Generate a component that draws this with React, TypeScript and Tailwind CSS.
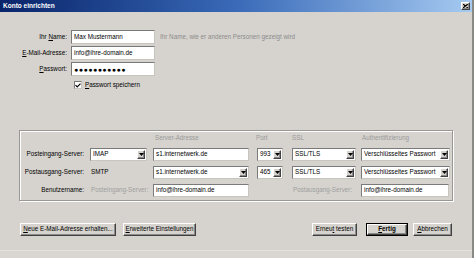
import React from 'react';
import { clsx, type ClassValue } from 'clsx';
import { twMerge } from 'tailwind-merge';

function cn(...inputs: ClassValue[]) {
  return twMerge(clsx(inputs));
}

const sunken =
  'border border-t-[#7a7a7a] border-l-[#7a7a7a] border-r-[#c8c5bf] border-b-[#c8c5bf] bg-white';
const raised =
  'border border-t-white border-l-white border-r-[#404040] border-b-[#404040] shadow-[inset_-1px_-1px_0_#8a8a8a] bg-[#d6d3ce]';

// first letter underlined, like a windows mnemonic
const Mn: React.FC<{ k: string; rest: string; before?: string }> = ({ k, rest, before }) => (
  <span>
    {before}
    <span className="underline underline-offset-[1px]">{k}</span>
    {rest}
  </span>
);

const Field: React.FC<{ value: string; className?: string; password?: boolean }> = ({
  value,
  className,
  password
}) => (
  <div className={cn(sunken, 'h-[14px] flex items-center pl-[2px] overflow-hidden', className)}>
    <span className={password ? 'tracking-[0.5px] text-[7px]' : ''}>{value}</span>
  </div>
);

const DropButton = () => (
  <span className={cn(raised, 'w-[8px] h-[9px] mr-[1px] flex items-center justify-center shrink-0')}>
    <svg width="5" height="3" viewBox="0 0 5 3">
      <path d="M0 0h5L2.5 3z" fill="#000" />
    </svg>
  </span>
);

const Select: React.FC<{ value: string; className?: string }> = ({ value, className }) => (
  <div className={cn(sunken, 'h-[13px] flex items-center overflow-hidden', className)}>
    <span className="flex-1 pl-[2px] truncate">{value}</span>
    <DropButton />
  </div>
);

const Button: React.FC<{ children: React.ReactNode; className?: string; primary?: boolean }> = ({
  children,
  className,
  primary
}) => (
  <div
    className={cn(
      'h-[13px] flex items-center justify-center',
      primary ? 'border border-black' : '',
      className
    )}
  >
    <div className={cn(raised, 'w-full h-full flex items-center justify-center', primary && 'font-bold')}>
      {children}
    </div>
  </div>
);

export default function App() {
  return (
    <div className="w-[474px] h-[258px] bg-[#d6d3ce] font-['Liberation_Sans',Arial,sans-serif] text-[6.3px] text-black leading-none overflow-hidden flex flex-col border-r-[2px] border-r-[#8a8884]">
      {/* title bar */}
      <div className="h-[12px] shrink-0 flex items-center justify-between pl-[3px] pr-[2px] bg-gradient-to-r from-[#0a246a] via-[#3a6ab8] to-[#a6caf0]">
        <span className="text-white font-bold text-[6.5px]">Konto einrichten</span>
        <span className={cn(raised, 'w-[9px] h-[8px] flex items-center justify-center')}>
          <svg width="5" height="4" viewBox="0 0 5 4">
            <path d="M0 0L5 4M5 0L0 4" stroke="#000" strokeWidth="1.2" />
          </svg>
        </span>
      </div>

      {/* account fields */}
      <div className="mt-[18px] grid grid-cols-[67px_84px_1fr] gap-x-[4px] gap-y-[2px] items-center">
        <span className="text-right"><Mn before="Ihr " k="N" rest="ame:" /></span>
        <Field value="Max Mustermann" />
        <span className="ml-[1px] text-[#8c8c8c]">Ihr Name, wie er anderen Personen gezeigt wird</span>

        <span className="text-right"><Mn k="E" rest="-Mail-Adresse:" /></span>
        <Field value="info@ihre-domain.de" />
        <span />

        <span className="text-right"><Mn k="P" rest="asswort:" /></span>
        <Field value="●●●●●●●●●●●" password />
        <span />
      </div>

      <div className="mt-[5px] ml-[74px] flex items-center gap-[3px]">
        <span className={cn(sunken, 'w-[8px] h-[8px] flex items-center justify-center')}>
          <svg width="6" height="5" viewBox="0 0 6 5">
            <path d="M0.5 2.2L2.2 4L5.5 0.6" stroke="#000" strokeWidth="1.2" fill="none" />
          </svg>
        </span>
        <Mn k="P" rest="asswort speichern" />
      </div>

      {/* server settings */}
      <div className="mt-[41px] ml-[19px] w-[434px] h-[71px] border border-[#9a9894] shadow-[inset_1px_1px_0_#fff,1px_1px_0_#fff] pt-[3px]">
        <div className="grid grid-cols-[70px_63px_104px_35px_69px_89px] grid-rows-[9px_13px_13px_13px] gap-y-[5px] items-center">
          <span />
          <span />
          <span className="pl-[2px] text-[#9a9a9a]">Server-Adresse</span>
          <span className="text-[#9a9a9a] -ml-[1px]">Port</span>
          <span className="text-[#9a9a9a]">SSL</span>
          <span className="pl-[1px] text-[#9a9a9a]">Authentifizierung</span>

          <span className="text-right pr-[6px]">Posteingang-Server:</span>
          <Select value="IMAP" className="w-[57px]" />
          <Field value="s1.internetwerk.de" className="w-[96px] h-[13px]" />
          <Select value="993" className="w-[26px]" />
          <Select value="SSL/TLS" className="w-[64px]" />
          <Select value="Verschlüsseltes Passwort" className="w-[89px]" />

          <span className="text-right pr-[6px]">Postausgang-Server:</span>
          <span className="pl-[1px]">SMTP</span>
          <Select value="s1.internetwerk.de" className="w-[96px]" />
          <Select value="465" className="w-[26px]" />
          <Select value="SSL/TLS" className="w-[64px]" />
          <Select value="Verschlüsseltes Passwort" className="w-[89px]" />

          <span className="text-right pr-[6px]">Benutzername:</span>
          <span className="pl-[1px] text-[#a0a0a0]">Posteingang-Server:</span>
          <Field value="info@ihre-domain.de" className="w-[96px] h-[13px]" />
          <span />
          <span className="pl-[1px] text-[#a0a0a0]">Postausgang-Server:</span>
          <Field value="info@ihre-domain.de" className="w-[88px] h-[13px]" />
        </div>
      </div>

      {/* buttons */}
      <div className="mt-[22px] pl-[20px] pr-[20px] flex items-center">
        <Button className="w-[96px]"><Mn k="N" rest="eue E-Mail-Adresse erhalten..." /></Button>
        <Button className="w-[73px] ml-[7px]"><Mn k="E" rest="rweiterte Einstellungen" /></Button>
        <div className="flex-1" />
        <Button className="w-[45px]"><Mn before="Erneu" k="t" rest=" testen" /></Button>
        <Button className="w-[42px] ml-[9px]" primary><Mn k="F" rest="ertig" /></Button>
        <Button className="w-[39px] ml-[5px]"><Mn k="A" rest="bbrechen" /></Button>
      </div>

      <div className="mt-auto h-[8px] border-t border-t-[#e4e2de] bg-[#d9d6d1]" />
    </div>
  );
}
